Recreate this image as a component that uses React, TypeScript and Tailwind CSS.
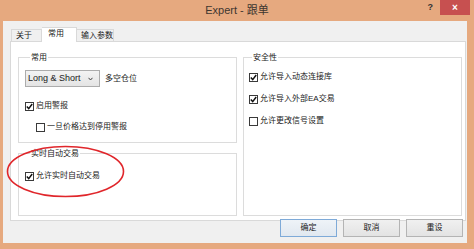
import React from "react";

const ORANGE = "#e6a97f";

function CheckBox({ checked, label, className = "" }: { checked?: boolean; label: string; className?: string }) {
  return (
    <div className={`flex h-[14px] items-center gap-[2px] ${className}`}>
      <span className="flex h-[9px] w-[9px] shrink-0 items-center justify-center border border-[#3a3a3a] bg-white">
        {checked && (
          <svg width="7" height="7" viewBox="0 0 7 7" aria-hidden>
            <path d="M0.8 3.6 L2.7 5.6 L6.2 1" stroke="#111" strokeWidth="1.5" fill="none" />
          </svg>
        )}
      </span>
      <span className="whitespace-nowrap text-[8px] leading-[14px] text-[#222]">{label}</span>
    </div>
  );
}

function Group({ title, titleOffset, className = "", children }: { title: string; titleOffset: string; className?: string; children: React.ReactNode }) {
  return (
    <div className={`flex flex-col border border-[#dcdcdc] bg-white ${className}`}>
      <span className={`-mt-[6px] self-start bg-white px-[1px] text-[8px] leading-[11px] text-[#222] ${titleOffset}`}>{title}</span>
      {children}
    </div>
  );
}

function Button({ label, primary }: { label: string; primary?: boolean }) {
  return (
    <div
      className={`flex h-[18px] w-[57px] items-center justify-center border text-[8px] leading-none text-[#222] ${
        primary
          ? "border-[#7eaad8] bg-gradient-to-b from-[#eef3f8] to-[#e1e8f0]"
          : "border-[#b4b4b4] bg-gradient-to-b from-[#f0f0f0] to-[#e3e3e3]"
      }`}
    >
      {label}
    </div>
  );
}

export default function App() {
  return (
    <div
      className="relative flex h-[249px] w-[474px] flex-col overflow-hidden font-['Liberation_Sans','Noto_Sans_CJK_SC',sans-serif]"
      style={{ backgroundColor: ORANGE }}
    >
      {/* 标题栏 */}
      <div className="grid h-[21px] shrink-0 grid-cols-[1fr_auto_1fr] items-start">
        <div />
        <div className="pt-[3px] text-[11px] leading-[14px] text-[#3d3630]">Expert - 跟单</div>
        <div className="flex items-start justify-end">
          <span className="mt-[1px] text-[9px] font-bold leading-[12px] text-[#333]">?</span>
          <div className="ml-[7px] mr-[4px] flex h-[15px] w-[30px] items-center justify-center bg-[#c75050] text-[10px] font-bold leading-none text-white">
            ×
          </div>
        </div>
      </div>

      {/* 客户区 */}
      <div className="ml-[3px] mr-[7px] mb-[6px] flex flex-1 flex-col bg-[#f0f0f0]">
        {/* 选项卡 */}
        <div className="flex h-[20px] shrink-0 items-end pl-[8px]">
          <div className="h-[12px] w-[31px] border-l border-r border-t border-[#d9d9d9] bg-[#f0f0f0] pl-[4px] text-[8px] leading-[12px] text-[#222]">
            关于
          </div>
          <div className="relative z-10 -mb-px h-[15px] w-[35px] border-r border-t border-[#d9d9d9] bg-white pl-[6px] pt-[1px] text-[8px] leading-[10px] text-[#222]">
            常用
          </div>
          <div className="h-[12px] w-[37px] border-r border-t border-[#d9d9d9] bg-[#f0f0f0] pl-[4px] text-[8px] leading-[12px] text-[#222]">
            输入参数
          </div>
        </div>

        {/* 面板 */}
        <div className="ml-[7px] flex h-[180px] w-[456px] shrink-0 gap-[6px] border border-[#d9d9d9] bg-white pl-[7px] pt-[15px]">
          <div className="flex w-[219px] flex-col">
            <Group title="常用" titleOffset="ml-[5px]" className="h-[86px] pl-[6px]">
              <div className="mt-[7px] flex items-center">
                <div className="flex h-[17px] w-[75px] items-center justify-between border border-[#acacac] bg-gradient-to-b from-[#f3f3f3] to-[#e4e4e4] pl-[2px] pr-[6px]">
                  <span className="whitespace-nowrap text-[9px] leading-none text-[#222]">Long &amp; Short</span>
                  <svg width="5" height="4" viewBox="0 0 5 4" aria-hidden>
                    <path d="M0.5 0.8 L2.5 3 L4.5 0.8" stroke="#444" strokeWidth="1" fill="none" />
                  </svg>
                </div>
                <span className="ml-[5px] text-[8px] leading-none text-[#222]">多空仓位</span>
              </div>
              <CheckBox checked label="启用警报" className="mt-[12px]" />
              <CheckBox label="一旦价格达到停用警报" className="ml-[11px] mt-[7px]" />
            </Group>
            <Group title="实时自动交易" titleOffset="ml-[5px]" className="mt-[10px] h-[63px] pl-[6px]">
              <CheckBox checked label="允许实时自动交易" className="mt-[10px]" />
            </Group>
          </div>
          <Group title="安全性" titleOffset="ml-[3px]" className="h-[159px] w-[219px] pl-[5px]">
            <CheckBox checked label="允许导入动态连接库" className="mt-[7px]" />
            <CheckBox checked label="允许导入外部EA交易" className="mt-[8px]" />
            <CheckBox label="允许更改信号设置" className="mt-[8px]" />
          </Group>
        </div>

        {/* 按钮 */}
        <div className="-mt-[2px] flex justify-end gap-[6px] pr-[4px]">
          <Button label="确定" primary />
          <Button label="取消" />
          <Button label="重设" />
        </div>
      </div>

      {/* 红色圈注 */}
      <svg className="pointer-events-none absolute left-0 top-0" width="474" height="249" aria-hidden>
        <ellipse cx="65.5" cy="171.5" rx="58" ry="25" fill="none" stroke="#e0262b" strokeWidth="1.6" />
      </svg>
    </div>
  );
}
